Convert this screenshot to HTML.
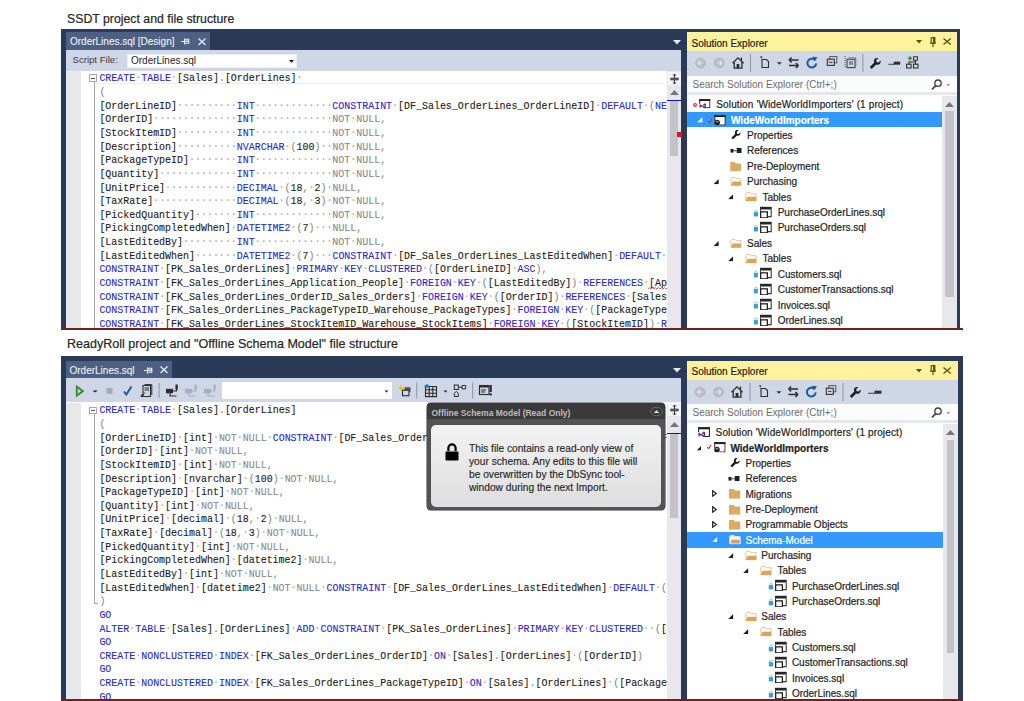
<!DOCTYPE html>
<html><head><meta charset="utf-8">
<style>
*{margin:0;padding:0;box-sizing:border-box}
html,body{width:1024px;height:701px;overflow:hidden;background:#fff;font-family:"Liberation Sans",sans-serif;position:relative}
.a{position:absolute}
svg.a{overflow:visible}
.title{position:absolute;left:67px;font-size:12.3px;color:#262626;white-space:nowrap;line-height:15px;-webkit-text-stroke:0.2px currentColor}
.frame{position:absolute;background:#2b3a57}
.redl{position:absolute;background:#7a1d22}
.tab{position:absolute;background:#4d6082;color:#eef0f5;font-size:10px;white-space:nowrap;-webkit-text-stroke:0.1px currentColor}
.tb{position:absolute;background:#cfd6e5}
.ed{position:absolute;background:#fff;overflow:hidden}
.gut{position:absolute;left:0;top:0;bottom:0;width:15px;background:#e7e8ea}
.code{position:absolute;left:33.4px;font-family:"Liberation Mono",monospace;font-size:9.96px;line-height:13.65px;color:#000;-webkit-text-stroke:0.1px currentColor}
.ln{height:13.65px;white-space:pre;transform:scaleY(1.1);transform-origin:0 9.5px}
.code b{font-weight:normal}
b.k{color:#2a2ac8}
b.i{color:#1a1a1a}
b.g{color:#8a8a8a}
b.n{color:#1a1a1a}
b.d{color:#a8a8a8;position:relative;top:-1px}
b.f{color:#ff00ff}
.vscroll{position:absolute;background:#e8e8ec}
.se{position:absolute;background:#fff;overflow:hidden}
.setitle{position:absolute;left:0;right:0;background:#fff29d;font-size:10px;color:#1e1e1e;white-space:nowrap;-webkit-text-stroke:0.2px currentColor}
.setb{position:absolute;left:0;right:0;background:#cfd6e5}
.search{position:absolute;left:0;right:0;background:#fcfcfc;font-size:10px;color:#6d6d6d;white-space:nowrap}
.tree{position:absolute;left:0;right:15px;font-size:10px;color:#1e1e1e;white-space:nowrap;-webkit-text-stroke:0.2px currentColor}
.row{position:relative;height:15.43px;line-height:15.4px}
.bt .row{height:15.35px}
.row span.t{position:absolute;top:0.5px}
.row svg{position:absolute;overflow:visible}
.sel{background:#3399ff;color:#fff}
</style></head><body>
<svg width="0" height="0" style="position:absolute">
<defs>
 <symbol id="tri" viewBox="0 0 6 6"><path d="M6 0V6H0Z" fill="#1e1e1e"/></symbol>
 <symbol id="triw" viewBox="0 0 6 6"><path d="M6 0V6H0Z" fill="#fff"/></symbol>
 <symbol id="tric" viewBox="0 0 6 8"><path d="M0.8 0.8L5.2 4L0.8 7.2Z" fill="none" stroke="#262626" stroke-width="1.5"/></symbol>
 <symbol id="fold" viewBox="0 0 12 10"><path d="M0 0H5L6 1.5H12V10H0Z" fill="#dcaa64"/></symbol>
 <symbol id="foldo" viewBox="0 0 12 10"><path d="M0.5 1.5L1.5 0.5H5L6 1.8H11.5V9.5H0.5Z" fill="#fff" stroke="#dcc49a"/><path d="M0.5 9.5L2.2 5H11.5V9.5Z" fill="#dca458"/></symbol>
 <symbol id="foldos" viewBox="0 0 12 10"><path d="M0.5 1.5L1.5 0.5H5L6 1.8H11.5V9.5H0.5Z" fill="#f6f0f0" stroke="#f4f4f4"/><path d="M1 9L2.5 5H11V9Z" fill="#d8a050"/></symbol>
 <symbol id="wrench" viewBox="0 0 10 10"><path d="M9.7 2.3L7.8 4.1 6.1 3.8 5.8 2.1 7.6 0.3C6.2-0.3 4.3 0.3 3.9 2 3.7 2.8 3.8 3.5 4.1 4.1L0.2 8 1.8 9.8 5.8 5.9C6.5 6.2 7.4 6.2 8.2 5.8 9.4 5.1 10 3.6 9.7 2.3Z" fill="#1e1e1e"/></symbol>
 <symbol id="refs" viewBox="0 0 12 6"><rect x="0" y="1" width="3.3" height="4" fill="#1e1e1e"/><rect x="3.3" y="2.6" width="3.5" height="0.9" fill="#1e1e1e"/><rect x="6.8" y="0" width="5.2" height="5.5" fill="#1e1e1e"/></symbol>
 <symbol id="sol" viewBox="0 0 12 10"><path d="M0.6 5V0.6H11.4V9.4H6" fill="#fff" stroke="#262626" stroke-width="1.1"/><rect x="0" y="0" width="12" height="2.2" fill="#262626"/><path d="M0.3 6.4L1.3 5.6 3.2 7.1 5.6 4.4 7.2 5.2V9.4L5.6 10.3 3.2 8 1.3 9.4 0.3 8.7Z" fill="#5b2c86"/><path d="M1.6 7.4L2.5 8 1.6 8.6Z M5.6 6.2V8.5L4.2 7.3Z" fill="#fff"/></symbol>
 <symbol id="proj" viewBox="0 0 12 11"><path d="M0.6 6V0.6H11.4V10.4H5.5" fill="#fff" stroke="#333" stroke-width="1.1"/><rect x="0" y="0" width="12" height="2.2" fill="#262626"/><circle cx="3" cy="8" r="2.9" fill="#1e1e1e"/><ellipse cx="3" cy="6.9" rx="1.7" ry="0.9" fill="#8a8a8a"/></symbol>
 <symbol id="check" viewBox="0 0 5 6"><path d="M0.3 3.2L1.8 5 4.7 0.5" fill="none" stroke="#d0283a" stroke-width="1.2"/></symbol>
 <symbol id="tfile" viewBox="0 0 19 13"><rect x="0.8" y="7" width="4.2" height="4.4" rx="0.6" fill="#3d9fd0"/><path d="M1.7 7.2V6.3A1.2 1.2 0 0 1 4.1 6.3V7.2" fill="none" stroke="#7cc3e6" stroke-width="0.9"/><rect x="7" y="1.8" width="11.7" height="2.7" fill="#252525"/><path d="M7.5 4.5V6.8M18.2 4.5V11.6H14.8" fill="none" stroke="#3a3a3a" stroke-width="1.1"/><rect x="7.65" y="6.85" width="6.7" height="6" fill="#fff" stroke="#222" stroke-width="1.3"/></symbol>
</defs></svg>

<div class="title" style="top:12px">SSDT project and file structure</div>
<div class="title" style="top:337px;font-size:12.55px">ReadyRoll project and "Offline Schema Model" file structure</div>

<!-- ============ TOP PANEL ============ -->
<div class="frame" style="left:61px;top:29px;width:899px;height:299px"></div>
<div class="redl" style="left:61px;top:328px;width:902px;height:2px"></div>

<div class="tab" style="left:66px;top:32px;width:144px;height:17.5px;line-height:18px;padding-left:4px;padding-top:1px">OrderLines.sql [Design]
  <svg class="a" style="left:115px;top:6px" width="9" height="7" viewBox="0 0 9 7"><path d="M0 3.5H3.5M3.5 0.5V6.5M4 1.2H7.8V5.2H4" fill="none" stroke="#e8ecf4" stroke-width="1.1"/><rect x="4" y="2.5" width="3.8" height="1.5" fill="#e8ecf4"/></svg>
  <svg class="a" style="left:131.5px;top:5.5px" width="8" height="7.5" viewBox="0 0 8 7.5"><path d="M0.5 0.5L7.5 7M7.5 0.5L0.5 7" stroke="#e8ecf4" stroke-width="1.3"/></svg>
</div>
<svg class="a" style="left:672.5px;top:39.5px" width="8" height="5" viewBox="0 0 8 5"><path d="M0 0H8L4 4.5Z" fill="#e8ecf4"/></svg>
<div class="a" style="left:66px;top:50px;width:615px;height:278px;background:#fff"></div>
<div class="tb" style="left:66px;top:49.5px;width:615px;height:21px">
  <div class="a" style="left:6.5px;top:3.5px;font-size:9.6px;color:#3c3c3c;line-height:14px">Script File:</div>
  <div class="a" style="left:60.5px;top:4px;width:170px;height:14px;background:#fff;border:1px solid #eceef3;font-size:10px;line-height:11.5px;padding-left:3.5px;color:#1e1e1e">OrderLines.sql</div>
  <svg class="a" style="left:222.5px;top:10px" width="5" height="3" viewBox="0 0 5 3"><path d="M0 0H5L2.5 3Z" fill="#1e1e1e"/></svg>
</div>
<div class="ed" style="left:66px;top:70.5px;width:600.5px;height:257.5px">
  <div class="gut"></div>
  <div class="a" style="left:23.4px;top:3.6px;width:7.7px;height:7.7px;border:1px solid #a8a8a8;background:#fff"></div>
  <div class="a" style="left:25.2px;top:7px;width:4.2px;height:1px;background:#555"></div>
  <div class="a" style="left:28px;top:11.3px;width:1px;height:260px;background:#a8a8a8"></div>
  <div class="code" style="top:1.9px">
<div class=ln><b class=k>CREATE</b><b class=d>·</b><b class=k>TABLE</b><b class=d>·</b><b class=i>[Sales]</b><b class=g>.</b><b class=i>[OrderLines]</b><b class=d>·</b></div>
<div class=ln><b class=g>(</b></div>
<div class=ln><b class=i>[OrderLineID]</b><b class=d>··········</b><b class=k>INT</b><b class=d>·············</b><b class=k>CONSTRAINT</b><b class=d>·</b><b class=i>[DF_Sales_OrderLines_OrderLineID]</b><b class=d>·</b><b class=k>DEFAULT</b><b class=d>·</b><b class=g>(</b><b class=k>NEXT</b><b class=d>·</b><b class=k>VALUE</b><b class=d>·</b><b class=k>FOR</b><b class=d>·</b><b class=i>[Sequences]</b><b class=g>.</b><b class=i>[OrderLineID]</b><b class=g>)</b><b class=d>·</b><b class=g>NOT</b><b class=d>·</b><b class=g>NULL</b><b class=g>,</b></div>
<div class=ln><b class=i>[OrderID]</b><b class=d>··············</b><b class=k>INT</b><b class=d>·············</b><b class=g>NOT</b><b class=d>·</b><b class=g>NULL</b><b class=g>,</b></div>
<div class=ln><b class=i>[StockItemID]</b><b class=d>··········</b><b class=k>INT</b><b class=d>·············</b><b class=g>NOT</b><b class=d>·</b><b class=g>NULL</b><b class=g>,</b></div>
<div class=ln><b class=i>[Description]</b><b class=d>··········</b><b class=k>NVARCHAR</b><b class=d>·</b><b class=g>(</b><b class=n>100</b><b class=g>)</b><b class=d>··</b><b class=g>NOT</b><b class=d>·</b><b class=g>NULL</b><b class=g>,</b></div>
<div class=ln><b class=i>[PackageTypeID]</b><b class=d>········</b><b class=k>INT</b><b class=d>·············</b><b class=g>NOT</b><b class=d>·</b><b class=g>NULL</b><b class=g>,</b></div>
<div class=ln><b class=i>[Quantity]</b><b class=d>·············</b><b class=k>INT</b><b class=d>·············</b><b class=g>NOT</b><b class=d>·</b><b class=g>NULL</b><b class=g>,</b></div>
<div class=ln><b class=i>[UnitPrice]</b><b class=d>············</b><b class=k>DECIMAL</b><b class=d>·</b><b class=g>(</b><b class=n>18</b><b class=g>,</b><b class=d>·</b><b class=n>2</b><b class=g>)</b><b class=d>·</b><b class=g>NULL</b><b class=g>,</b></div>
<div class=ln><b class=i>[TaxRate]</b><b class=d>··············</b><b class=k>DECIMAL</b><b class=d>·</b><b class=g>(</b><b class=n>18</b><b class=g>,</b><b class=d>·</b><b class=n>3</b><b class=g>)</b><b class=d>·</b><b class=g>NOT</b><b class=d>·</b><b class=g>NULL</b><b class=g>,</b></div>
<div class=ln><b class=i>[PickedQuantity]</b><b class=d>·······</b><b class=k>INT</b><b class=d>·············</b><b class=g>NOT</b><b class=d>·</b><b class=g>NULL</b><b class=g>,</b></div>
<div class=ln><b class=i>[PickingCompletedWhen]</b><b class=d>·</b><b class=k>DATETIME2</b><b class=d>·</b><b class=g>(</b><b class=n>7</b><b class=g>)</b><b class=d>···</b><b class=g>NULL</b><b class=g>,</b></div>
<div class=ln><b class=i>[LastEditedBy]</b><b class=d>·········</b><b class=k>INT</b><b class=d>·············</b><b class=g>NOT</b><b class=d>·</b><b class=g>NULL</b><b class=g>,</b></div>
<div class=ln><b class=i>[LastEditedWhen]</b><b class=d>·······</b><b class=k>DATETIME2</b><b class=d>·</b><b class=g>(</b><b class=n>7</b><b class=g>)</b><b class=d>···</b><b class=k>CONSTRAINT</b><b class=d>·</b><b class=i>[DF_Sales_OrderLines_LastEditedWhen]</b><b class=d>·</b><b class=k>DEFAULT</b><b class=d>·</b><b class=g>(</b><b class=f>SYSDATETIME</b><b class=g>(</b><b class=g>)</b><b class=g>)</b><b class=d>·</b><b class=g>NOT</b><b class=d>·</b><b class=g>NULL</b><b class=g>,</b></div>
<div class=ln><b class=k>CONSTRAINT</b><b class=d>·</b><b class=i>[PK_Sales_OrderLines]</b><b class=d>·</b><b class=k>PRIMARY</b><b class=d>·</b><b class=k>KEY</b><b class=d>·</b><b class=k>CLUSTERED</b><b class=d>·</b><b class=g>(</b><b class=i>[OrderLineID]</b><b class=d>·</b><b class=k>ASC</b><b class=g>)</b><b class=g>,</b></div>
<div class=ln><b class=k>CONSTRAINT</b><b class=d>·</b><b class=i>[FK_Sales_OrderLines_Application_People]</b><b class=d>·</b><b class=k>FOREIGN</b><b class=d>·</b><b class=k>KEY</b><b class=d>·</b><b class=g>(</b><b class=i>[LastEditedBy]</b><b class=g>)</b><b class=d>·</b><b class=k>REFERENCES</b><b class=d>·</b><b class=i>[Application]</b><b class=g>.</b><b class=i>[People]</b><b class=d>·</b><b class=g>(</b><b class=i>[PersonID]</b><b class=g>)</b><b class=g>,</b></div>
<div class=ln><b class=k>CONSTRAINT</b><b class=d>·</b><b class=i>[FK_Sales_OrderLines_OrderID_Sales_Orders]</b><b class=d>·</b><b class=k>FOREIGN</b><b class=d>·</b><b class=k>KEY</b><b class=d>·</b><b class=g>(</b><b class=i>[OrderID]</b><b class=g>)</b><b class=d>·</b><b class=k>REFERENCES</b><b class=d>·</b><b class=i>[Sales]</b><b class=g>.</b><b class=i>[Orders]</b><b class=d>·</b><b class=g>(</b><b class=i>[OrderID]</b><b class=g>)</b><b class=g>,</b></div>
<div class=ln><b class=k>CONSTRAINT</b><b class=d>·</b><b class=i>[FK_Sales_OrderLines_PackageTypeID_Warehouse_PackageTypes]</b><b class=d>·</b><b class=k>FOREIGN</b><b class=d>·</b><b class=k>KEY</b><b class=d>·</b><b class=g>(</b><b class=i>[PackageTypeID]</b><b class=g>)</b><b class=d>·</b><b class=k>REFERENCES</b><b class=d>·</b><b class=i>[Warehouse]</b><b class=g>.</b><b class=i>[PackageTypes]</b></div>
<div class=ln><b class=k>CONSTRAINT</b><b class=d>·</b><b class=i>[FK_Sales_OrderLines_StockItemID_Warehouse_StockItems]</b><b class=d>·</b><b class=k>FOREIGN</b><b class=d>·</b><b class=k>KEY</b><b class=d>·</b><b class=g>(</b><b class=i>[StockItemID]</b><b class=g>)</b><b class=d>·</b><b class=k>REFERENCES</b><b class=d>·</b><b class=i>[Warehouse]</b><b class=g>.</b><b class=i>[StockItems]</b></div>
  </div>
  <svg class="a" style="left:582px;top:216.5px" width="20" height="3" viewBox="0 0 20 3"><path d="M0 2L1.5 0.5 3 2 4.5 0.5 6 2 7.5 0.5 9 2 10.5 0.5 12 2 13.5 0.5 15 2 16.5 0.5 18 2 19.5 0.5" fill="none" stroke="#e04040" stroke-width="0.8"/></svg>
  <div class="a" style="left:30px;top:12.6px;width:570px;height:1px;background:#eeeeee"></div>
</div>
<div class="vscroll" style="left:666.5px;top:70.5px;width:14.5px;height:257.5px">
  <div class="a" style="left:1px;top:1px;width:13px;height:13px;background:#f4f5f8"></div>
  <svg class="a" style="left:3px;top:3px" width="9" height="10" viewBox="0 0 9 10"><path d="M4.5 0V10M0 5H9" stroke="#333" stroke-width="1.1"/><path d="M0.5 3.6H8.5V6.4H0.5Z" fill="#555"/><path d="M3 1.5L4.5 0 6 1.5M3 8.5L4.5 10 6 8.5" fill="none" stroke="#333"/></svg>
  <svg class="a" style="left:3px;top:19.5px" width="9" height="5" viewBox="0 0 9 5"><path d="M0 5L4.5 0 9 5Z" fill="#74767e"/></svg>
  <div class="a" style="left:0;top:29px;width:14.5px;height:1.6px;background:#1010c8"></div>
  <div class="a" style="left:3.5px;top:30.5px;width:8px;height:55px;background:#c2c3c9"></div>
  <div class="a" style="left:10px;top:61.5px;width:5px;height:5px;background:#e81123"></div>
</div>

<div class="se" style="left:687px;top:32px;width:270px;height:296px">
  <div class="setitle" style="top:0;height:19px;line-height:19px;padding-left:4.5px;padding-top:1.6px">Solution Explorer
    <svg class="a" style="left:228.6px;top:8px" width="6" height="3.5" viewBox="0 0 6 3.5"><path d="M0 0H6L3 3.5Z" fill="#5a4e12"/></svg>
    <svg class="a" style="left:243.3px;top:4.8px" width="6" height="10" viewBox="0 0 6 10"><path d="M1.2 0.6H4.8V6.2M1.2 0.6V6.2" fill="none" stroke="#5a4e12" stroke-width="1.2"/><path d="M0 6.2H6M3 6.2V10" stroke="#5a4e12" stroke-width="1.2"/><rect x="3" y="1" width="1.8" height="5" fill="#5a4e12"/></svg>
    <svg class="a" style="left:256.2px;top:6px" width="8.3" height="7" viewBox="0 0 8.3 7"><path d="M0.5 0.4L7.8 6.6M7.8 0.4L0.5 6.6" stroke="#5a4e12" stroke-width="1.3"/></svg>
  </div>
  <div class="setb" style="top:19px;height:24.5px">
    <svg class="a" style="left:0;top:0" width="240" height="24" viewBox="0 0 240 24">
      <circle cx="13.5" cy="12" r="4.8" fill="#bcc0c8" stroke="#b0b4bc"/><path d="M11 12H16M11 12L13 10M11 12L13 14" stroke="#e4e6ea" stroke-width="1.2" fill="none"/>
      <circle cx="32.3" cy="12" r="4.8" fill="#bcc0c8" stroke="#b0b4bc"/><path d="M29.8 12H34.8M34.8 12L32.8 10M34.8 12L32.8 14" stroke="#e4e6ea" stroke-width="1.2" fill="none"/>
      <path d="M45.5 12.3L51 6.8 56.6 12.3M47.2 10.8V17.1H54.9V10.8" fill="none" stroke="#2d2d2d" stroke-width="1.3"/><rect x="49.6" y="13" width="2.8" height="4" fill="#2d2d2d"/><rect x="53.8" y="6.5" width="1.3" height="3" fill="#2d2d2d"/>
      <rect x="63" y="3" width="1" height="18" fill="#8e96a8"/>
      <path d="M72.8 5.4H75.8L74.3 7.5Z" fill="#2d2d2d"/><path d="M75 8.5V16.5H81.5V10.5L79.5 8.5Z" fill="none" stroke="#2d2d2d" stroke-width="1.1"/>
      <path d="M89.9 11.3H94.8L92.35 13.7Z" fill="#2d2d2d"/>
      <path d="M102 9H111.5M102 9L104.6 6.5M102 9L104.6 11.5M111.5 14.5H102M111.5 14.5L108.9 12M111.5 14.5L108.9 17" fill="none" stroke="#2d2d2d" stroke-width="1.5"/>
      <path d="M127.5 8.6A4.4 4.4 0 1 0 129.2 12.4" fill="none" stroke="#1e5b9c" stroke-width="2"/><path d="M125.2 5.8L130.5 6.2 127.8 10.5Z" fill="#1e5b9c"/>
      <rect x="142.8" y="5.6" width="7" height="6.2" fill="none" stroke="#555" stroke-width="1"/><rect x="140.3" y="8.2" width="7" height="6.2" fill="#cfd6e5" stroke="#333" stroke-width="1.1"/><path d="M142 11.3H145.5" stroke="#333"/>
      <path d="M158 5V16" stroke="#555" stroke-dasharray="1 1"/><rect x="160" y="8.3" width="8" height="8.3" fill="none" stroke="#444" stroke-width="1.1"/><path d="M161.5 6.8H168.8V15" fill="none" stroke="#777" stroke-width="1"/><path d="M162 11H166M162 13H166" stroke="#444"/>
      <rect x="175.4" y="3" width="1" height="18" fill="#8e96a8"/>
      <use href="#wrench" x="182.6" y="6.8" width="11.4" height="11.4"/>
      <rect x="206.7" y="10.7" width="6.5" height="3" fill="#2d2d2d"/><rect x="201.4" y="12.8" width="6" height="0.9" fill="#2d2d2d"/>
      <path d="M223 5.2V9.4M220.9 7.3H225.1" stroke="#3a8a3a" stroke-width="1.5"/><rect x="219.6" y="13.2" width="4.5" height="3.8" fill="none" stroke="#333" stroke-width="1.1"/><rect x="226.5" y="13.2" width="4.5" height="3.8" fill="none" stroke="#333" stroke-width="1.1"/><path d="M226.6 5.8H230.4V9.2H226.6ZM228.5 9.2V11H222V13.2M228.5 11V13.2" fill="none" stroke="#333" stroke-width="1.1"/>
    </svg>
  </div>
  <div class="search" style="top:43.5px;height:16.5px;line-height:17px;padding-left:5.5px;padding-top:0.8px">Search Solution Explorer (Ctrl+;)
    <svg class="a" style="left:244px;top:3px" width="20" height="11" viewBox="0 0 20 11"><circle cx="7" cy="4.2" r="3.2" fill="none" stroke="#444" stroke-width="1.3"/><path d="M4.8 6.6L1 10.4" stroke="#444" stroke-width="1.8"/><path d="M15.5 5.2H19L17.25 6.8Z" fill="#555"/></svg>
  </div>
  <div class="a" style="left:0;right:0;top:60px;height:3px;background:#e4e6ec"></div>
  <div class="vscroll" style="left:255px;top:64px;width:15px;height:232px">
    <svg class="a" style="left:3px;top:5.5px" width="9" height="5" viewBox="0 0 9 5"><path d="M0 5L4.5 0 9 5Z" fill="#74767e"/></svg>
    <div class="a" style="left:2.6px;top:15.4px;width:9px;height:185.6px;background:#c2c3c9"></div>
  </div>
  <div class="tree" style="top:64.6px;--rh:15.43px">
    <div class="row"><svg style="left:5.8px;top:6.3px" width="4" height="4"><circle cx="2" cy="2" r="2" fill="#d9363e"/><rect x="0.9" y="1.6" width="2.2" height="0.8" fill="#fff"/></svg><svg style="left:12px;top:2.6px" width="11.6" height="9.4"><use href="#sol" width="11.6" height="9.4"/></svg><span class="t" style="left:29.3px;letter-spacing:0.13px">Solution 'WideWorldImporters' (1 project)</span></div>
    <div class="row sel"><svg style="left:9.8px;top:5.2px" width="5.6" height="5.6"><use href="#triw" width="5.6" height="5.6"/></svg><svg style="left:20.8px;top:5.8px" width="4.6" height="5.6"><use href="#check" width="4.6" height="5.6"/></svg><svg style="left:26.5px;top:2.5px" width="12" height="10.5"><use href="#proj" width="12" height="10.5"/></svg><span class="t" style="left:44px;font-weight:bold">WideWorldImporters</span></div>
    <div class="row"><svg style="left:44px;top:3px" width="10" height="9.6"><use href="#wrench" width="10" height="9.6"/></svg><span class="t" style="left:60px">Properties</span></div>
    <div class="row"><svg style="left:42.6px;top:5.1px" width="12" height="5.5"><use href="#refs" width="12" height="5.5"/></svg><span class="t" style="left:60px">References</span></div>
    <div class="row"><svg style="left:43.2px;top:3.5px" width="11.5" height="9.2"><use href="#fold" width="11.5" height="9.2"/></svg><span class="t" style="left:60px">Pre-Deployment</span></div>
    <div class="row"><svg style="left:25.5px;top:5.2px" width="6" height="5.2"><use href="#tri" width="6" height="5.2"/></svg><svg style="left:42.8px;top:3.2px" width="12" height="9"><use href="#foldo" width="12" height="9"/></svg><span class="t" style="left:60px">Purchasing</span></div>
    <div class="row"><svg style="left:41px;top:5.2px" width="5.2" height="5.5"><use href="#tri" width="5.2" height="5.5"/></svg><svg style="left:58.2px;top:3.2px" width="12" height="9.4"><use href="#foldo" width="12" height="9.4"/></svg><span class="t" style="left:75.5px">Tables</span></div>
    <div class="row"><svg style="left:66px;top:0.1px" width="19" height="13"><use href="#tfile" width="19" height="13"/></svg><span class="t" style="left:90.7px">PurchaseOrderLines.sql</span></div>
    <div class="row"><svg style="left:66px;top:0.1px" width="19" height="13"><use href="#tfile" width="19" height="13"/></svg><span class="t" style="left:90.7px">PurchaseOrders.sql</span></div>
    <div class="row"><svg style="left:25.5px;top:5.2px" width="6" height="5.2"><use href="#tri" width="6" height="5.2"/></svg><svg style="left:42.8px;top:3.2px" width="12" height="9"><use href="#foldo" width="12" height="9"/></svg><span class="t" style="left:60px">Sales</span></div>
    <div class="row"><svg style="left:41px;top:5.2px" width="5.2" height="5.5"><use href="#tri" width="5.2" height="5.5"/></svg><svg style="left:58.2px;top:3.2px" width="12" height="9.4"><use href="#foldo" width="12" height="9.4"/></svg><span class="t" style="left:75.5px">Tables</span></div>
    <div class="row"><svg style="left:66px;top:0.1px" width="19" height="13"><use href="#tfile" width="19" height="13"/></svg><span class="t" style="left:90.7px">Customers.sql</span></div>
    <div class="row"><svg style="left:66px;top:0.1px" width="19" height="13"><use href="#tfile" width="19" height="13"/></svg><span class="t" style="left:90.7px">CustomerTransactions.sql</span></div>
    <div class="row"><svg style="left:66px;top:0.1px" width="19" height="13"><use href="#tfile" width="19" height="13"/></svg><span class="t" style="left:90.7px">Invoices.sql</span></div>
    <div class="row"><svg style="left:66px;top:0.1px" width="19" height="13"><use href="#tfile" width="19" height="13"/></svg><span class="t" style="left:90.7px">OrderLines.sql</span></div>
  </div>
</div>

<!-- ============ BOTTOM PANEL ============ -->
<div class="frame" style="left:61px;top:356px;width:902px;height:343px"></div>
<div class="redl" style="left:61px;top:699px;width:902px;height:2px"></div>

<div class="tab" style="left:66px;top:361px;width:106px;height:16.6px;line-height:17.5px;padding-left:3.5px;padding-top:0.8px">OrderLines.sql
  <svg class="a" style="left:78px;top:5.5px" width="9" height="7" viewBox="0 0 9 7"><path d="M0 3.5H3.5M3.5 0.5V6.5M4 1.2H7.8V5.2H4" fill="none" stroke="#e8ecf4" stroke-width="1.1"/><rect x="4" y="2.5" width="3.8" height="1.5" fill="#e8ecf4"/></svg>
  <svg class="a" style="left:94px;top:5px" width="8" height="7.5" viewBox="0 0 8 7.5"><path d="M0.5 0.5L7.5 7M7.5 0.5L0.5 7" stroke="#e8ecf4" stroke-width="1.3"/></svg>
</div>
<svg class="a" style="left:672.5px;top:367.5px" width="8" height="5" viewBox="0 0 8 5"><path d="M0 0H8L4 4.5Z" fill="#e8ecf4"/></svg>
<div class="a" style="left:66px;top:378px;width:615px;height:321px;background:#fff"></div>
<div class="tb" style="left:66px;top:377.6px;width:615px;height:24.9px">
  <svg class="a" style="left:0;top:0" width="615" height="25" viewBox="0 0 615 25">
    <path d="M10.8 8.6L16.8 13.2 10.8 17.6Z" fill="none" stroke="#388a34" stroke-width="1.9"/>
    <path d="M26.7 12.4H31.7L29.2 14.6Z" fill="#1e1e1e"/>
    <rect x="40.5" y="9.9" width="6" height="6" fill="#a5abb8"/>
    <path d="M58 13.5L60.3 16.5 65.5 8.5" fill="none" stroke="#1e5b9c" stroke-width="2"/>
    <path d="M77 7.5H84.5V18.5H77Z" fill="none" stroke="#2d2d2d" stroke-width="1.1"/><path d="M78.5 6.6H85.8V17" fill="none" stroke="#2d2d2d"/><path d="M78.5 10H83M78.5 12H83M75 18.5L79 14.5" stroke="#2d2d2d"/><circle cx="76" cy="17.8" r="1.2" fill="#2d2d2d"/>
    <rect x="92.6" y="5" width="1" height="15" fill="#8e96a8"/>
    <rect x="100" y="10.8" width="7" height="4.5" fill="#2d2d2d"/><path d="M107 13H110.5V8.5M110.5 18H104V15.3" fill="none" stroke="#2d2d2d" stroke-width="1.2"/><rect x="109.5" y="6.5" width="2.3" height="5" fill="#2d2d2d"/>
    <g fill="#a8aebb" stroke="#a8aebb"><rect x="119" y="10.8" width="7" height="4.5" stroke="none"/><path d="M126 13H129.5V8.5M129.5 18H123V15.3" fill="none" stroke-width="1.2"/><rect x="128.5" y="6.5" width="2.3" height="5" stroke="none"/></g>
    <g fill="#a8aebb" stroke="#a8aebb"><rect x="138" y="10.8" width="7" height="4.5" stroke="none"/><path d="M145 13H148.5V8.5M148.5 18H142V15.3" fill="none" stroke-width="1.2"/><rect x="147.5" y="6.5" width="2.3" height="5" stroke="none"/></g>
  </svg>
  <div class="a" style="left:156.2px;top:4.1px;width:169.4px;height:17.2px;background:#fff"></div>
  <svg class="a" style="left:0;top:0" width="615" height="25" viewBox="0 0 615 25">
    <path d="M318.6 12.6H322.4L320.5 14.5Z" fill="#1e1e1e"/>
    <path d="M335 6.6L336 9 338.5 10 336 11 335 13.5 334 11 331.5 10 334 9Z" fill="#e8b830"/><rect x="338.5" y="9.2" width="6" height="5" fill="#555"/><rect x="336.5" y="12.2" width="6.5" height="5.5" fill="#cfd6e5" stroke="#2d2d2d" stroke-width="1.1"/>
    <rect x="350.2" y="4.7" width="1" height="15.9" fill="#8e96a8"/>
    <path d="M359.5 8.5H370.5V18.6H359.5ZM359.5 11.8H370.5M359.5 15.2H370.5M363.2 8.5V18.6M366.8 8.5V18.6" fill="none" stroke="#2d2d2d" stroke-width="1.1"/><path d="M358.5 8H363.5M361 6V10" stroke="#1e7ec8" stroke-width="1.6"/>
    <path d="M377.6 12.6H381.4L379.5 14.5Z" fill="#1e1e1e"/>
    <rect x="388.3" y="7" width="4" height="4.5" fill="none" stroke="#2d2d2d"/><path d="M388.3 15.3L390.3 13.5 392.3 15.3V18.5H388.3Z" fill="none" stroke="#2d2d2d"/><path d="M392.3 9.2H396M396 7.5H399.7V10.9H396Z" fill="none" stroke="#2d2d2d"/>
    <rect x="406.2" y="4.7" width="1" height="15.9" fill="#8e96a8"/>
    <rect x="413.5" y="7.5" width="9.5" height="9" fill="none" stroke="#2d2d2d" stroke-width="1.1"/><rect x="413.5" y="7.5" width="9.5" height="2" fill="#2d2d2d"/><path d="M415 12H420M415 14H419" stroke="#2d2d2d"/><rect x="423.6" y="7" width="2.2" height="7" fill="#2d2d2d"/><rect x="423.6" y="15.3" width="2.2" height="2.2" fill="#2d2d2d"/>
  </svg>
</div>
<div class="ed" style="left:66px;top:402.5px;width:600.5px;height:296.5px">
  <div class="gut"></div>
  <div class="a" style="left:23.4px;top:4px;width:7.7px;height:7.7px;border:1px solid #a8a8a8;background:#fff"></div>
  <div class="a" style="left:25.2px;top:7.4px;width:4.2px;height:1px;background:#555"></div>
  <div class="a" style="left:28px;top:11.7px;width:1px;height:189.5px;background:#a8a8a8"></div>
  <div class="a" style="left:28px;top:200.5px;width:4px;height:1px;background:#a8a8a8"></div>
  <div class="code" style="top:1.8px">
<div class=ln><b class=k>CREATE</b><b class=d>·</b><b class=k>TABLE</b><b class=d>·</b><b class=i>[Sales]</b><b class=g>.</b><b class=i>[OrderLines]</b></div>
<div class=ln><b class=g>(</b></div>
<div class=ln><b class=i>[OrderLineID]</b><b class=d>·</b><b class=i>[int]</b><b class=d>·</b><b class=g>NOT</b><b class=d>·</b><b class=g>NULL</b><b class=d>·</b><b class=k>CONSTRAINT</b><b class=d>·</b><b class=i>[DF_Sales_OrderLines_OrderLineID]</b><b class=d>·</b><b class=k>DEFAULT</b><b class=d>·</b><b class=g>(</b><b class=k>NEXT</b><b class=d>·</b><b class=k>VALUE</b><b class=d>·</b><b class=k>FOR</b><b class=d>·</b><b class=i>[Sequences]</b><b class=g>.</b><b class=i>[OrderLineID]</b><b class=g>)</b><b class=g>,</b></div>
<div class=ln><b class=i>[OrderID]</b><b class=d>·</b><b class=i>[int]</b><b class=d>·</b><b class=g>NOT</b><b class=d>·</b><b class=g>NULL</b><b class=g>,</b></div>
<div class=ln><b class=i>[StockItemID]</b><b class=d>·</b><b class=i>[int]</b><b class=d>·</b><b class=g>NOT</b><b class=d>·</b><b class=g>NULL</b><b class=g>,</b></div>
<div class=ln><b class=i>[Description]</b><b class=d>·</b><b class=i>[nvarchar]</b><b class=d>·</b><b class=g>(</b><b class=n>100</b><b class=g>)</b><b class=d>·</b><b class=g>NOT</b><b class=d>·</b><b class=g>NULL</b><b class=g>,</b></div>
<div class=ln><b class=i>[PackageTypeID]</b><b class=d>·</b><b class=i>[int]</b><b class=d>·</b><b class=g>NOT</b><b class=d>·</b><b class=g>NULL</b><b class=g>,</b></div>
<div class=ln><b class=i>[Quantity]</b><b class=d>·</b><b class=i>[int]</b><b class=d>·</b><b class=g>NOT</b><b class=d>·</b><b class=g>NULL</b><b class=g>,</b></div>
<div class=ln><b class=i>[UnitPrice]</b><b class=d>·</b><b class=i>[decimal]</b><b class=d>·</b><b class=g>(</b><b class=n>18</b><b class=g>,</b><b class=d>·</b><b class=n>2</b><b class=g>)</b><b class=d>·</b><b class=g>NULL</b><b class=g>,</b></div>
<div class=ln><b class=i>[TaxRate]</b><b class=d>·</b><b class=i>[decimal]</b><b class=d>·</b><b class=g>(</b><b class=n>18</b><b class=g>,</b><b class=d>·</b><b class=n>3</b><b class=g>)</b><b class=d>·</b><b class=g>NOT</b><b class=d>·</b><b class=g>NULL</b><b class=g>,</b></div>
<div class=ln><b class=i>[PickedQuantity]</b><b class=d>·</b><b class=i>[int]</b><b class=d>·</b><b class=g>NOT</b><b class=d>·</b><b class=g>NULL</b><b class=g>,</b></div>
<div class=ln><b class=i>[PickingCompletedWhen]</b><b class=d>·</b><b class=i>[datetime2]</b><b class=d>·</b><b class=g>NULL</b><b class=g>,</b></div>
<div class=ln><b class=i>[LastEditedBy]</b><b class=d>·</b><b class=i>[int]</b><b class=d>·</b><b class=g>NOT</b><b class=d>·</b><b class=g>NULL</b><b class=g>,</b></div>
<div class=ln><b class=i>[LastEditedWhen]</b><b class=d>·</b><b class=i>[datetime2]</b><b class=d>·</b><b class=g>NOT</b><b class=d>·</b><b class=g>NULL</b><b class=d>·</b><b class=k>CONSTRAINT</b><b class=d>·</b><b class=i>[DF_Sales_OrderLines_LastEditedWhen]</b><b class=d>·</b><b class=k>DEFAULT</b><b class=d>·</b><b class=g>(</b><b class=f>SYSDATETIME</b><b class=g>(</b><b class=g>)</b><b class=g>)</b></div>
<div class=ln><b class=g>)</b></div>
<div class=ln><b class=k>GO</b></div>
<div class=ln><b class=k>ALTER</b><b class=d>·</b><b class=k>TABLE</b><b class=d>·</b><b class=i>[Sales]</b><b class=g>.</b><b class=i>[OrderLines]</b><b class=d>·</b><b class=k>ADD</b><b class=d>·</b><b class=k>CONSTRAINT</b><b class=d>·</b><b class=i>[PK_Sales_OrderLines]</b><b class=d>·</b><b class=k>PRIMARY</b><b class=d>·</b><b class=k>KEY</b><b class=d>·</b><b class=k>CLUSTERED</b><b class=d>··</b><b class=g>(</b><b class=i>[OrderLineID]</b><b class=d>·</b><b class=k>ASC</b><b class=g>)</b></div>
<div class=ln><b class=k>GO</b></div>
<div class=ln><b class=k>CREATE</b><b class=d>·</b><b class=k>NONCLUSTERED</b><b class=d>·</b><b class=k>INDEX</b><b class=d>·</b><b class=i>[FK_Sales_OrderLines_OrderID]</b><b class=d>·</b><b class=k>ON</b><b class=d>·</b><b class=i>[Sales]</b><b class=g>.</b><b class=i>[OrderLines]</b><b class=d>·</b><b class=g>(</b><b class=i>[OrderID]</b><b class=g>)</b></div>
<div class=ln><b class=k>GO</b></div>
<div class=ln><b class=k>CREATE</b><b class=d>·</b><b class=k>NONCLUSTERED</b><b class=d>·</b><b class=k>INDEX</b><b class=d>·</b><b class=i>[FK_Sales_OrderLines_PackageTypeID]</b><b class=d>·</b><b class=k>ON</b><b class=d>·</b><b class=i>[Sales]</b><b class=g>.</b><b class=i>[OrderLines]</b><b class=d>·</b><b class=g>(</b><b class=i>[PackageTypeID]</b><b class=g>)</b></div>
<div class=ln><b class=k>GO</b></div>
  </div>
</div>
<div class="vscroll" style="left:666.5px;top:402.5px;width:14.5px;height:296.5px">
  <div class="a" style="left:1px;top:0.5px;width:13px;height:13px;background:#f4f5f8"></div>
  <svg class="a" style="left:3px;top:2.5px" width="9" height="10" viewBox="0 0 9 10"><path d="M4.5 0V10M0 5H9" stroke="#333" stroke-width="1.1"/><path d="M0.5 3.6H8.5V6.4H0.5Z" fill="#555"/><path d="M3 1.5L4.5 0 6 1.5M3 8.5L4.5 10 6 8.5" fill="none" stroke="#333"/></svg>
  <svg class="a" style="left:3px;top:19.5px" width="9" height="5" viewBox="0 0 9 5"><path d="M0 5L4.5 0 9 5Z" fill="#74767e"/></svg>
  <div class="a" style="left:0;top:30px;width:14.5px;height:1.6px;background:#1010c8"></div>
  <div class="a" style="left:3.3px;top:31px;width:8px;height:84px;background:#c2c3c9"></div>
</div>

<div class="se" style="left:687px;top:361px;width:270.5px;height:338px">
  <div class="setitle" style="top:0;height:18.5px;line-height:18.5px;padding-left:4.5px;padding-top:1.6px">Solution Explorer
    <svg class="a" style="left:228.6px;top:7.5px" width="6" height="3.5" viewBox="0 0 6 3.5"><path d="M0 0H6L3 3.5Z" fill="#5a4e12"/></svg>
    <svg class="a" style="left:243.3px;top:4.3px" width="6" height="10" viewBox="0 0 6 10"><path d="M1.2 0.6H4.8V6.2M1.2 0.6V6.2" fill="none" stroke="#5a4e12" stroke-width="1.2"/><path d="M0 6.2H6M3 6.2V10" stroke="#5a4e12" stroke-width="1.2"/><rect x="3" y="1" width="1.8" height="5" fill="#5a4e12"/></svg>
    <svg class="a" style="left:256.2px;top:5.5px" width="8.3" height="7" viewBox="0 0 8.3 7"><path d="M0.5 0.4L7.8 6.6M7.8 0.4L0.5 6.6" stroke="#5a4e12" stroke-width="1.3"/></svg>
  </div>
  <div class="setb" style="top:18.5px;height:24.2px">
    <svg class="a" style="left:0;top:0" width="240" height="24" viewBox="0 0 240 24">
      <circle cx="13" cy="12" r="4.8" fill="#bcc0c8" stroke="#b0b4bc"/><path d="M10.5 12H15.5M10.5 12L12.5 10M10.5 12L12.5 14" stroke="#e4e6ea" stroke-width="1.2" fill="none"/>
      <circle cx="31.5" cy="12" r="4.8" fill="#bcc0c8" stroke="#b0b4bc"/><path d="M29 12H34M34 12L32 10M34 12L32 14" stroke="#e4e6ea" stroke-width="1.2" fill="none"/>
      <path d="M44.5 12.3L50 6.8 55.6 12.3M46.2 10.8V17.1H53.9V10.8" fill="none" stroke="#2d2d2d" stroke-width="1.3"/><rect x="48.6" y="13" width="2.8" height="4" fill="#2d2d2d"/><rect x="52.8" y="6.5" width="1.3" height="3" fill="#2d2d2d"/>
      <rect x="62.5" y="3" width="1" height="18" fill="#8e96a8"/>
      <path d="M71.8 5.4H74.8L73.3 7.5Z" fill="#2d2d2d"/><path d="M74 8.5V16.5H80.5V10.5L78.5 8.5Z" fill="none" stroke="#2d2d2d" stroke-width="1.1"/>
      <path d="M89.5 11.3H94.4L91.95 13.7Z" fill="#2d2d2d"/>
      <path d="M101.5 9H111M101.5 9L104.1 6.5M101.5 9L104.1 11.5M111 14.5H101.5M111 14.5L108.4 12M111 14.5L108.4 17" fill="none" stroke="#2d2d2d" stroke-width="1.5"/>
      <path d="M127 8.6A4.4 4.4 0 1 0 128.7 12.4" fill="none" stroke="#1e5b9c" stroke-width="2"/><path d="M124.7 5.8L130 6.2 127.3 10.5Z" fill="#1e5b9c"/>
      <rect x="141.8" y="5.6" width="7" height="6.2" fill="none" stroke="#555" stroke-width="1"/><rect x="139.3" y="8.2" width="7" height="6.2" fill="#cfd6e5" stroke="#333" stroke-width="1.1"/><path d="M141 11.3H144.5" stroke="#333"/>
      <rect x="155.5" y="3" width="1" height="18" fill="#8e96a8"/>
      <use href="#wrench" x="162.6" y="6.8" width="11.4" height="11.4"/>
      <rect x="187.5" y="10.7" width="7" height="3" fill="#2d2d2d"/><rect x="181" y="12.8" width="6.8" height="0.9" fill="#2d2d2d"/>
    </svg>
  </div>
  <div class="search" style="top:42.7px;height:16.7px;line-height:16.7px;padding-left:5.5px;padding-top:1px">Search Solution Explorer (Ctrl+;)
    <svg class="a" style="left:244px;top:3px" width="20" height="11" viewBox="0 0 20 11"><circle cx="7" cy="4.2" r="3.2" fill="none" stroke="#444" stroke-width="1.3"/><path d="M4.8 6.6L1 10.4" stroke="#444" stroke-width="1.8"/><path d="M15.5 5.2H19L17.25 6.8Z" fill="#555"/></svg>
  </div>
  <div class="a" style="left:0;right:0;top:59.4px;height:3px;background:#e4e6ec"></div>
  <div class="vscroll" style="left:256px;top:62.5px;width:15px;height:276px">
    <svg class="a" style="left:3px;top:6px" width="9" height="5" viewBox="0 0 9 5"><path d="M0 5L4.5 0 9 5Z" fill="#74767e"/></svg>
    <div class="a" style="left:3.5px;top:16px;width:7px;height:213px;background:#c2c3c9"></div>
  </div>
  <div class="tree bt" style="top:63.8px;right:14.5px">
    <div class="row"><svg style="left:11px;top:2.3px" width="12" height="10.3"><use href="#sol" width="12" height="10.3"/></svg><span class="t" style="left:28.6px;letter-spacing:0.13px">Solution 'WideWorldImporters' (1 project)</span></div>
    <div class="row"><svg style="left:9.2px;top:5.7px" width="5.6" height="4.5"><use href="#tri" width="5.6" height="4.5"/></svg><svg style="left:20px;top:4px" width="4.6" height="5.6"><use href="#check" width="4.6" height="5.6"/></svg><svg style="left:26.5px;top:2.2px" width="11.7" height="10.5"><use href="#proj" width="11.7" height="10.5"/></svg><span class="t" style="left:43.4px;font-weight:bold">WideWorldImporters</span></div>
    <div class="row"><svg style="left:42.6px;top:3px" width="10" height="9.6"><use href="#wrench" width="10" height="9.6"/></svg><span class="t" style="left:58.5px">Properties</span></div>
    <div class="row"><svg style="left:41.2px;top:5.1px" width="12" height="5.5"><use href="#refs" width="12" height="5.5"/></svg><span class="t" style="left:58.5px">References</span></div>
    <div class="row"><svg style="left:24.8px;top:4.2px" width="5" height="7"><use href="#tric" width="5" height="7"/></svg><svg style="left:41.8px;top:3.3px" width="11.5" height="9.8"><use href="#fold" width="11.5" height="9.8"/></svg><span class="t" style="left:58.5px">Migrations</span></div>
    <div class="row"><svg style="left:24.8px;top:4.2px" width="5" height="7"><use href="#tric" width="5" height="7"/></svg><svg style="left:41.8px;top:3.3px" width="11.5" height="9.8"><use href="#fold" width="11.5" height="9.8"/></svg><span class="t" style="left:58.5px">Pre-Deployment</span></div>
    <div class="row"><svg style="left:24.8px;top:4.2px" width="5" height="7"><use href="#tric" width="5" height="7"/></svg><svg style="left:41.8px;top:3.3px" width="11.5" height="9.8"><use href="#fold" width="11.5" height="9.8"/></svg><span class="t" style="left:58.5px">Programmable Objects</span></div>
    <div class="row sel"><svg style="left:25px;top:5.2px" width="5.5" height="5"><use href="#triw" width="5.5" height="5"/></svg><svg style="left:41.8px;top:3.2px" width="12" height="9.4"><use href="#foldos" width="12" height="9.4"/></svg><span class="t" style="left:58.5px">Schema-Model</span></div>
    <div class="row"><svg style="left:40.5px;top:5.2px" width="5.5" height="5"><use href="#tri" width="5.5" height="5"/></svg><svg style="left:57.5px;top:3.2px" width="12" height="9.4"><use href="#foldo" width="12" height="9.4"/></svg><span class="t" style="left:74.3px">Purchasing</span></div>
    <div class="row"><svg style="left:56px;top:5.2px" width="5.5" height="5"><use href="#tri" width="5.5" height="5"/></svg><svg style="left:73px;top:3.2px" width="12" height="9.4"><use href="#foldo" width="12" height="9.4"/></svg><span class="t" style="left:90.4px">Tables</span></div>
    <div class="row"><svg style="left:81px;top:0.1px" width="19" height="13"><use href="#tfile" width="19" height="13"/></svg><span class="t" style="left:104.9px">PurchaseOrderLines.sql</span></div>
    <div class="row"><svg style="left:81px;top:0.1px" width="19" height="13"><use href="#tfile" width="19" height="13"/></svg><span class="t" style="left:104.9px">PurchaseOrders.sql</span></div>
    <div class="row"><svg style="left:40.5px;top:5.2px" width="5.5" height="5"><use href="#tri" width="5.5" height="5"/></svg><svg style="left:57.5px;top:3.2px" width="12" height="9.4"><use href="#foldo" width="12" height="9.4"/></svg><span class="t" style="left:74.3px">Sales</span></div>
    <div class="row"><svg style="left:56px;top:5.2px" width="5.5" height="5"><use href="#tri" width="5.5" height="5"/></svg><svg style="left:73px;top:3.2px" width="12" height="9.4"><use href="#foldo" width="12" height="9.4"/></svg><span class="t" style="left:90.4px">Tables</span></div>
    <div class="row"><svg style="left:81px;top:0.1px" width="19" height="13"><use href="#tfile" width="19" height="13"/></svg><span class="t" style="left:104.9px">Customers.sql</span></div>
    <div class="row"><svg style="left:81px;top:0.1px" width="19" height="13"><use href="#tfile" width="19" height="13"/></svg><span class="t" style="left:104.9px">CustomerTransactions.sql</span></div>
    <div class="row"><svg style="left:81px;top:0.1px" width="19" height="13"><use href="#tfile" width="19" height="13"/></svg><span class="t" style="left:104.9px">Invoices.sql</span></div>
    <div class="row"><svg style="left:81px;top:0.1px" width="19" height="13"><use href="#tfile" width="19" height="13"/></svg><span class="t" style="left:104.9px">OrderLines.sql</span></div>
  </div>
</div>

<!-- popup -->
<div class="a" style="left:427.3px;top:403.2px;width:237.7px;height:107px;background:#535355;border-radius:4px;box-shadow:0 0 0 0.5px #333"></div>
<div class="a" style="left:427.3px;top:403.2px;width:237.7px;height:16.3px;background:#3a3a3b;border-radius:4px 4px 0 0"></div>
<div class="a" style="left:431.5px;top:404.8px;font-size:8.5px;font-weight:bold;color:#bdbdbd;line-height:16px;white-space:nowrap">Offline Schema Model (Read Only)</div>
<svg class="a" style="left:649.8px;top:407.2px" width="13" height="9" viewBox="0 0 13 9"><ellipse cx="6.5" cy="4.5" rx="6" ry="4.2" fill="#3a3a3b" stroke="#5f6a6a" stroke-width="1"/><path d="M3.8 6L6.5 3 9.2 6Z" fill="#cde6e8"/></svg>
<div class="a" style="left:431px;top:424.5px;width:230px;height:82.2px;border-radius:5px;background:linear-gradient(#f2f2f2,#dedede)"></div>
<svg class="a" style="left:444.5px;top:443px" width="14" height="17.5" viewBox="0 0 14 17.5"><path d="M3.4 8V5A3.6 3.6 0 0 1 10.6 5V8" fill="none" stroke="#000" stroke-width="2.2"/><rect x="0.5" y="8.5" width="13" height="9" rx="0.8" fill="#000"/></svg>
<div class="a" style="left:469px;top:443px;font-size:10.2px;line-height:12.85px;color:#262626;white-space:nowrap;-webkit-text-stroke:0.15px currentColor">This file contains a read-only view of<br>your schema. Any edits to this file will<br>be overwritten by the DbSync tool-<br>window during the next Import.</div>

</body></html>
